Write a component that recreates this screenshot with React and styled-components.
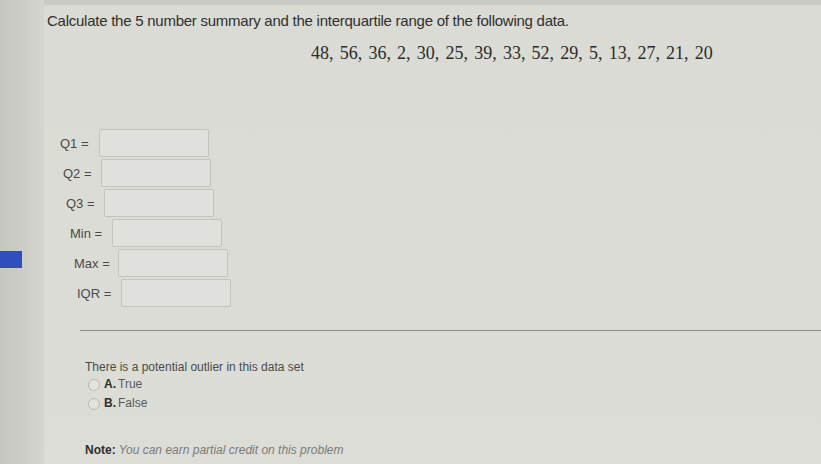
import React from 'react';
import styled, { createGlobalStyle } from 'styled-components';

const GlobalStyle = createGlobalStyle`
  html, body {
    margin: 0;
    padding: 0;
    background: #dcddd7;
  }
  body {
    font-family: 'Liberation Sans', Arial, sans-serif;
    color: #3a3b38;
  }
`;

const Screen = styled.div`
  width: 821px;
  height: 464px;
  overflow: hidden;
  display: flex;
  background: linear-gradient(180deg, #c9cac4 0px, #c9cac4 4px, #dadbd5 6px, #dcddd7 100%);
`;

const Gutter = styled.div`
  width: 44px;
  flex-shrink: 0;
  padding-top: 251px;
  box-sizing: border-box;
  background: linear-gradient(90deg, #c6c7c0 0%, #cdcec7 60%, #d5d6d0 100%);
`;

const BlueTab = styled.div`
  width: 22px;
  height: 17px;
  background: #2f4fbf;
`;

const Main = styled.div`
  flex: 1;
  display: flex;
  flex-direction: column;
  padding-top: 12px;
`;

const Title = styled.div`
  padding-left: 3px;
  font-size: 15px;
  line-height: 18px;
  color: #2f302d;
  letter-spacing: -0.25px;
`;

const DataLine = styled.div`
  margin-top: 13px;
  padding-left: 267px;
  font-family: 'Liberation Serif', 'DejaVu Serif', serif;
  font-size: 18px;
  line-height: 20px;
  color: #2c2c2a;
  word-spacing: 1.7px;
`;

const Form = styled.div`
  margin-top: 66px;
  display: flex;
  flex-direction: column;
  gap: 2px;
`;

const Row = styled.div`
  display: flex;
  align-items: center;
  height: 28px;
  padding-left: ${p => p.$indent}px;
`;

const Label = styled.span`
  width: ${p => p.$w}px;
  font-size: 13px;
  color: #4a4b48;
`;

const Box = styled.div`
  width: 110px;
  height: 28px;
  box-sizing: border-box;
  border: 1px solid #c3c4be;
  border-radius: 2px;
  background: #e0e1dc;
`;

const Rule = styled.div`
  margin-top: 23px;
  margin-left: 36px;
  height: 1px;
  background: #8d8f8a;
`;

const Question = styled.div`
  margin-top: 29px;
  padding-left: 41px;
  font-size: 12px;
  line-height: 14px;
  color: #4a4b48;
`;

const Options = styled.div`
  margin-top: 3px;
  padding-left: 44px;
  display: flex;
  flex-direction: column;
  gap: 4px;
`;

const Option = styled.label`
  display: flex;
  align-items: center;
  gap: 4px;
  font-size: 12px;
  line-height: 15px;
  color: #5a5b57;
`;

const Radio = styled.span`
  width: 10px;
  height: 10px;
  border-radius: 50%;
  border: 1px solid #b9bab4;
  background: #e2e3de;
`;

const Letter = styled.b`
  color: #2e2f2c;
  font-weight: 700;
  margin-right: 2px;
`;

const Note = styled.div`
  margin-top: 32px;
  padding-left: 41px;
  font-size: 12px;
  color: #6a6b67;
  b {
    color: #2e2f2c;
    margin-right: 3px;
  }
  i {
    color: #7a7b77;
  }
`;

const rows = [
  { label: 'Q1 =', indent: 16, w: 39 },
  { label: 'Q2 =', indent: 19, w: 38 },
  { label: 'Q3 =', indent: 22, w: 38 },
  { label: 'Min =', indent: 26, w: 42 },
  { label: 'Max =', indent: 30, w: 44 },
  { label: 'IQR =', indent: 33, w: 44 },
];

export default function App() {
  return (
    <>
      <GlobalStyle />
      <Screen>
        <Gutter>
          <BlueTab />
        </Gutter>
        <Main>
          <Title>Calculate the 5 number summary and the interquartile range of the following data.</Title>
          <DataLine>48, 56, 36, 2, 30, 25, 39, 33, 52, 29, 5, 13, 27, 21, 20</DataLine>
          <Form>
            {rows.map(r => (
              <Row key={r.label} $indent={r.indent}>
                <Label $w={r.w}>{r.label}</Label>
                <Box />
              </Row>
            ))}
          </Form>
          <Rule />
          <Question>There is a potential outlier in this data set</Question>
          <Options>
            <Option>
              <Radio />
              <span><Letter>A.</Letter>True</span>
            </Option>
            <Option>
              <Radio />
              <span><Letter>B.</Letter>False</span>
            </Option>
          </Options>
          <Note>
            <b>Note:</b>
            <i>You can earn partial credit on this problem</i>
          </Note>
        </Main>
      </Screen>
    </>
  );
}
